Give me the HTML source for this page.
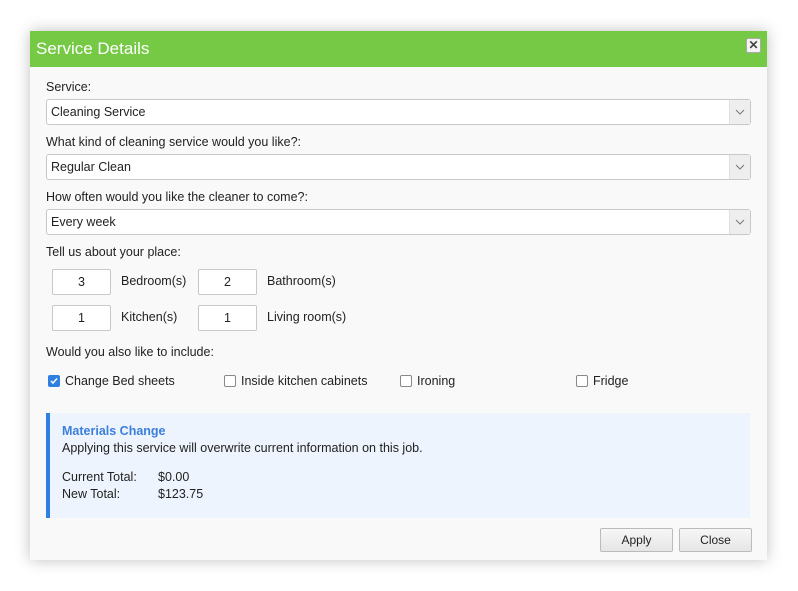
<!DOCTYPE html><html><head><style>
body{margin:0;width:798px;height:591px;background:#fff;font-family:"Liberation Sans",sans-serif;font-size:12.5px;color:#222;position:relative;overflow:hidden}
.dlg{position:absolute;left:30px;top:31px;width:737px;height:529px;background:#f9f9f9;box-shadow:0 0 14px rgba(0,0,0,.25)}
.hd{height:36px;background:#76c945;color:#fff;font-size:17px;line-height:36px;padding-left:6px}
.x{position:absolute;right:6px;top:7px;width:13px;height:13px;background:#f4f4f4;border:1px solid #aaa;border-radius:2px;font-size:12px;line-height:12px;text-align:center;color:#444;font-weight:bold}
.a{position:absolute}
.lbl{position:absolute;left:16px}
.sel{position:absolute;left:16px;width:699px;height:24px;background:#fff;border:1px solid #c8c8c8;border-radius:3px;line-height:24px;padding-left:4px;box-sizing:content-box}
.sel:after{content:"";position:absolute;right:0;top:0;width:20px;height:24px;background:#eee;border-left:1px solid #e0e0e0}
.sel svg{position:absolute;right:5px;top:9px;z-index:1}
.num{position:absolute;width:57px;height:24px;background:#fff;border:1px solid #c8c8c8;border-radius:2px;text-align:center;line-height:24px}
.cb{position:absolute;top:343px;display:flex;align-items:center}
.cb i{display:inline-block;width:10px;height:10px;border:1px solid #888;border-radius:2px;background:#fff;margin-right:5px}
.info{position:absolute;left:16px;top:382px;width:700px;height:105px;background:#edf4fd;border-left:4px solid #2f7fe0}
.btn{position:absolute;top:497px;width:71px;height:22px;border:1px solid #bbb;border-radius:2px;background:linear-gradient(#f6f6f6,#e6e6e6);text-align:center;line-height:22px;font-size:12px}
</style></head><body>
<div class="dlg">
<div class="hd">Service Details</div><div class="x">✕</div>
<div class="lbl" style="top:49px">Service:</div>
<div class="sel" style="top:68px">Cleaning Service<svg width="10" height="6"><path d="M1 1L5 5L9 1" stroke="#777" fill="none"/></svg></div>
<div class="lbl" style="top:104px">What kind of cleaning service would you like?:</div>
<div class="sel" style="top:123px">Regular Clean<svg width="10" height="6"><path d="M1 1L5 5L9 1" stroke="#777" fill="none"/></svg></div>
<div class="lbl" style="top:159px">How often would you like the cleaner to come?:</div>
<div class="sel" style="top:178px">Every week<svg width="10" height="6"><path d="M1 1L5 5L9 1" stroke="#777" fill="none"/></svg></div>
<div class="lbl" style="top:214px">Tell us about your place:</div>
<div class="num" style="left:22px;top:238px">3</div><div class="a" style="left:91px;top:243px">Bedroom(s)</div>
<div class="num" style="left:168px;top:238px">2</div><div class="a" style="left:237px;top:243px">Bathroom(s)</div>
<div class="num" style="left:22px;top:274px">1</div><div class="a" style="left:91px;top:279px">Kitchen(s)</div>
<div class="num" style="left:168px;top:274px">1</div><div class="a" style="left:237px;top:279px">Living room(s)</div>
<div class="lbl" style="top:314px">Would you also like to include:</div>
<div class="cb" style="left:18px"><i style="background:#2f7fe0;border-color:#2f7fe0;position:relative"><svg width="10" height="10" style="position:absolute;left:0;top:0"><path d="M2 5L4 7L8 2.5" stroke="#fff" stroke-width="1.5" fill="none"/></svg></i>Change Bed sheets</div>
<div class="cb" style="left:194px"><i></i>Inside kitchen cabinets</div>
<div class="cb" style="left:370px"><i></i>Ironing</div>
<div class="cb" style="left:546px"><i></i>Fridge</div>
<div class="info">
<div class="a" style="left:12px;top:11px;color:#3b7fdc;font-weight:bold">Materials Change</div>
<div class="a" style="left:12px;top:28px">Applying this service will overwrite current information on this job.</div>
<div class="a" style="left:12px;top:57px">Current Total:</div><div class="a" style="left:108px;top:57px">$0.00</div>
<div class="a" style="left:12px;top:74px">New Total:</div><div class="a" style="left:108px;top:74px">$123.75</div>
</div>
<div class="btn" style="left:570px">Apply</div><div class="btn" style="left:649px">Close</div>
</div>
</body></html>
